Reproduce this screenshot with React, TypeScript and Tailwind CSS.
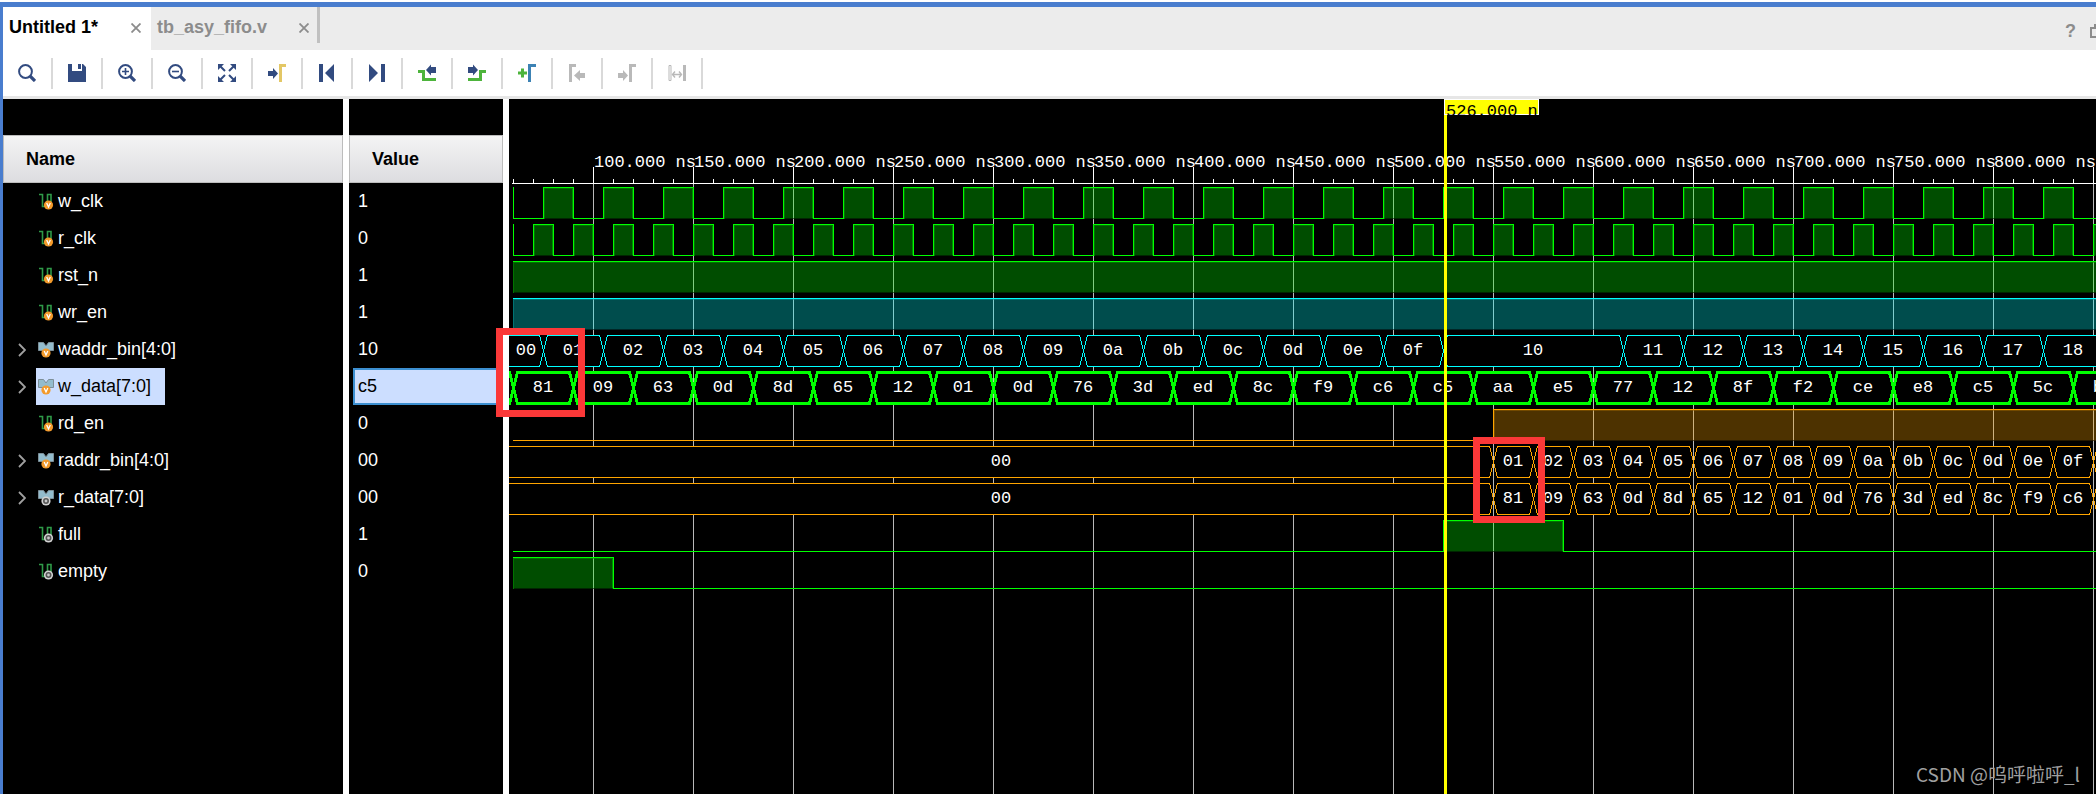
import { useState } from 'react'
import type { ReactNode } from 'react'

const GREEN = '#00ff00'
const CYAN = '#00ffff'
const ORANGE = '#ffa500'

const NAVY = '#324b80'
const LEAF = '#4db43c'
const GREY = '#b9b9b9'

// Time axis: two pixels per nanosecond, 100 ns at x = 84
const NS_END = 1400
const LAST_LABEL = 800
const xAt = (ns: number) => 84 + (ns - 100) * 2
const START = 60
const AXIS_Y = 84
const ROW_PITCH = 37
const ROW_HEIGHT = 31

type Segment = [from: number, to: number, label: string]

interface Signal {
  name: string
  value: string
  color: string
  kind: 'reg' | 'wire'
  high?: [number, number][]
  bus?: Segment[]
}

function clock(first: number, width: number, period: number) {
  const out: [number, number][] = []
  for (let t = first; t < NS_END; t += period) out.push([t, t + width])
  return out
}

function steps(from: number, step: number, labels: string): Segment[] {
  return labels.split(' ').map((l, i) => [from + i * step, from + (i + 1) * step, l])
}

const signals: Signal[] = [
  { name: 'w_clk', value: '1', color: GREEN, kind: 'reg', high: clock(75, 15, 30) },
  { name: 'r_clk', value: '0', color: GREEN, kind: 'reg', high: clock(70, 10, 20) },
  { name: 'rst_n', value: '1', color: GREEN, kind: 'reg', high: [[START, NS_END]] },
  { name: 'wr_en', value: '1', color: CYAN, kind: 'reg', high: [[START, NS_END]] },
  {
    name: 'waddr_bin[4:0]', value: '10', color: CYAN, kind: 'reg',
    bus: [
      [54, 75, '00'],
      ...steps(75, 30, '01 02 03 04 05 06 07 08 09 0a 0b 0c 0d 0e 0f'),
      [525, 615, '10'],
      ...steps(615, 30, '11 12 13 14 15 16 17 18'),
    ],
  },
  {
    name: 'w_data[7:0]', value: 'c5', color: GREEN, kind: 'reg',
    bus: [
      [30, 60, ''],
      ...steps(60, 30, '81 09 63 0d 8d 65 12 01 0d 76 3d ed 8c f9 c6 c5 aa e5 77 12 8f f2 ce e8 c5 5c bd'),
    ],
  },
  { name: 'rd_en', value: '0', color: ORANGE, kind: 'reg', high: [[550, NS_END]] },
  {
    name: 'raddr_bin[4:0]', value: '00', color: ORANGE, kind: 'reg',
    bus: [
      [54, 550, '00'],
      ...steps(550, 20, '01 02 03 04 05 06 07 08 09 0a 0b 0c 0d 0e 0f'),
      [850, NS_END, ''],
    ],
  },
  {
    name: 'r_data[7:0]', value: '00', color: ORANGE, kind: 'wire',
    bus: [
      [54, 550, '00'],
      ...steps(550, 20, '81 09 63 0d 8d 65 12 01 0d 76 3d ed 8c f9 c6'),
      [850, NS_END, ''],
    ],
  },
  { name: 'full', value: '1', color: GREEN, kind: 'wire', high: [[525, 585]] },
  { name: 'empty', value: '0', color: GREEN, kind: 'wire', high: [[START, 110]] },
]

/* toolbar icons, all on an 18 x 18 grid */

function Glass({ children }: { children?: ReactNode }) {
  return (
    <>
      <circle cx="7.5" cy="7.5" r="6.4" fill="none" stroke={NAVY} strokeWidth="2" />
      <path d="M12 12 L17 17" stroke={NAVY} strokeWidth="3.2" />
      {children}
    </>
  )
}

const tools: { label: string; disabled?: boolean; art: ReactNode }[] = [
  { label: 'Search', art: <Glass /> },
  {
    label: 'Save',
    art: (
      <>
        <path d="M0 0H4V7H14V0H15L18 3V18H0Z" fill={NAVY} />
        <path d="M10 0H13V5H10Z" fill={NAVY} />
      </>
    ),
  },
  { label: 'Zoom in', art: <Glass><path d="M7.5 4V11M4 7.5H11" stroke={NAVY} strokeWidth="1.6" /></Glass> },
  { label: 'Zoom out', art: <Glass><path d="M4 7.5H11" stroke={NAVY} strokeWidth="1.6" /></Glass> },
  {
    label: 'Zoom fit',
    art: (
      <>
        <path d="M0 0H6L0 6ZM18 0H12L18 6ZM0 18H6L0 12ZM18 18H12L18 12Z" fill={NAVY} />
        <path d="M2 2L7 7M16 2L11 7M2 16L7 11M16 16L11 11" stroke={NAVY} strokeWidth="2" />
      </>
    ),
  },
  {
    label: 'Go to cursor',
    art: (
      <>
        <path d="M0 7H5V4L10 9.5L5 15V12H0Z" fill={NAVY} />
        <path d="M12.5 18V1.5H18" fill="none" stroke="#e3c765" strokeWidth="3" />
      </>
    ),
  },
  { label: 'Go to time 0', art: <path d="M1 0H5V18H1ZM16 0V18L7 9Z" fill={NAVY} /> },
  { label: 'Go to last time', art: <path d="M13 0H17V18H13ZM1 0V18L10 9Z" fill={NAVY} /> },
  {
    label: 'Previous transition',
    art: (
      <>
        <path d="M0 7.5H5.5V15.5H18" fill="none" stroke={LEAF} strokeWidth="3" />
        <path d="M18 3H13V0.5L8 6L13 11.5V9H18Z" fill={NAVY} />
      </>
    ),
  },
  {
    label: 'Next transition',
    art: (
      <>
        <path d="M0 15.5H12.5V7.5H18" fill="none" stroke={LEAF} strokeWidth="3" />
        <path d="M0 3H5V0.5L10 6L5 11.5V9H0Z" fill={NAVY} />
      </>
    ),
  },
  {
    label: 'Add marker',
    art: (
      <>
        <path d="M4.5 4.5V13.5M0 9H9" stroke={LEAF} strokeWidth="3" />
        <path d="M11.5 18V1.5H18" fill="none" stroke="#3c82b4" strokeWidth="3" />
      </>
    ),
  },
  {
    label: 'Previous marker',
    disabled: true,
    art: (
      <>
        <path d="M2.5 18V1.5H8" fill="none" stroke={GREY} strokeWidth="3" />
        <path d="M17 9H12V6L6 11.5L12 17V14H17Z" fill={GREY} />
      </>
    ),
  },
  {
    label: 'Next marker',
    disabled: true,
    art: (
      <>
        <path d="M12.5 18V1.5H18" fill="none" stroke={GREY} strokeWidth="3" />
        <path d="M0 9H5V6L10 11.5L5 17V14H0Z" fill={GREY} />
      </>
    ),
  },
  {
    label: 'Swap cursors',
    disabled: true,
    art: (
      <>
        <path d="M1 1.5H3V16.5H1Z" fill="none" stroke={GREY} />
        <path d="M15 1H18V17H15Z" fill={GREY} />
        <path d="M5 10.5H13M7 7.5L4.5 10.5L7 13.5M11 7.5L13.5 10.5L11 13.5" fill="none" stroke={GREY} strokeWidth="1.4" />
      </>
    ),
  },
]

function Badge({ kind, cx }: { kind: Signal['kind']; cx: number }) {
  if (kind === 'wire') {
    return (
      <>
        <circle cx={cx} cy="12" r="4.6" fill="#d2d2d2" />
        <circle cx={cx} cy="12" r="2.2" fill="#c8c8c8" stroke="#555" strokeWidth="1.6" />
      </>
    )
  }
  return (
    <>
      <circle cx={cx} cy="12" r="4.6" fill="#f39a2b" />
      <path d={`M${cx - 1.8} 10L${cx} 14L${cx + 1.8} 10`} fill="none" stroke="#fff" strokeWidth="1.3" />
    </>
  )
}

function SignalIcon({ signal }: { signal: Signal }) {
  return (
    <svg width="16" height="17" viewBox="0 0 16 17" className="shrink-0">
      {signal.bus ? (
        <>
          <path d="M0.5 1.5H5.5L8 5L10.5 1.5H15.5V9.5H0.5Z" fill="#93bccd" stroke="#7d8f98" />
          <Badge kind={signal.kind} cx={8} />
        </>
      ) : (
        <>
          <path d="M1 1.5H4.5V13.5H9.5V1.5H13V9" fill="none" stroke="#2f9a48" strokeWidth="1.6" />
          <Badge kind={signal.kind} cx={10.5} />
        </>
      )}
    </svg>
  )
}

/* waveforms */

function Level({ signal, top }: { signal: Signal; top: number }) {
  const high = signal.high ?? []
  const bottom = top + ROW_HEIGHT
  const low = !high.some(([a]) => a === START)
  const hadPulse = signal.name.endsWith('clk')

  let d = `M3 ${low && !hadPulse ? bottom : top}`
  if (hadPulse) d += `H${xAt(START)}V${bottom}`
  for (const [a, b] of high) {
    if (a === START) d += `H${xAt(b)}V${bottom}`
    else d += `H${xAt(a)}V${top}H${xAt(b)}V${bottom}`
  }
  d += `H${xAt(NS_END)}`

  return (
    <g stroke={signal.color} fill="none" transform="translate(0.5 0.5)">
      {high.map(([a, b]) => {
        const left = xAt(a) + (a === START ? 0 : 1)
        return (
          <rect
            key={a}
            x={left}
            y={top + 1}
            width={xAt(b) - 1 - left}
            height={ROW_HEIGHT - 1}
            fill={signal.color}
            fillOpacity="0.3"
            stroke="none"
          />
        )
      })}
      <path d={d} />
      {high.map(([a, b]) => {
        const left = xAt(a) + (a === START ? 0 : 1)
        const edge = `M${left} ${bottom}V${top + 1}H${xAt(b) - 1}V${bottom}`
        return (
          <g key={a}>
            <path d={edge} stroke="#000" strokeOpacity="0.35" />
            <path d={edge} strokeOpacity="0.45" />
            <path d={`M${left} ${bottom}H${xAt(b) - 1}`} stroke="#000" strokeOpacity="0.5" />
          </g>
        )
      })}
    </g>
  )
}

function Bus({ signal, top, thick }: { signal: Signal; top: number; thick: boolean }) {
  const mid = top + 15
  const bottom = top + ROW_HEIGHT
  const cells = signal.bus!.map(([a, b, label]) => {
    const x0 = xAt(a)
    const x1 = xAt(b)
    return {
      key: a,
      label,
      // a segment that began before the window is centred on its visible part
      centre: (Math.max(x0, 0) + x1) / 2,
      points: `${x0},${mid} ${x0 + 4},${top} ${x1 - 4},${top} ${x1},${mid} ${x1},${mid + 1} ${x1 - 4},${bottom} ${x0 + 4},${bottom} ${x0},${mid + 1}`,
    }
  })
  return (
    <g>
      <g transform="translate(0.5 0.5)">
        {cells.map((c) => <polygon key={c.key} points={c.points} fill="#000" />)}
        {cells.map((c) => (
          <polygon key={c.key} points={c.points} fill="none" stroke={signal.color} strokeWidth={thick ? 3 : 1} />
        ))}
      </g>
      {cells.map((c) => c.label && (
        <text key={c.key} x={c.centre} y={top + 20} fill="#fff" textAnchor="middle">{c.label}</text>
      ))}
    </g>
  )
}

function Waveform({ selected }: { selected: string }) {
  const ticks: number[] = []
  for (let t = START; t < NS_END; t += 10) ticks.push(t)
  const majors = ticks.filter((t) => t >= 100 && t % 50 === 0)
  const cursor = xAt(526)

  return (
    <svg
      className="block h-full w-full bg-black font-['Liberation_Mono',monospace] text-[17px]"
      shapeRendering="crispEdges"
      fill="currentColor"
      role="img"
      aria-label="Waveform"
    >
      {majors.map((t) => (
        <line key={t} x1={xAt(t) + 0.5} x2={xAt(t) + 0.5} y1={AXIS_Y} y2="100%" stroke="#b9b9b9" />
      ))}
      {ticks.map((t) => {
        const x = xAt(t) + 0.5
        return <line key={t} x1={x} x2={x} y1={majors.includes(t) ? 68 : 80} y2={AXIS_Y} stroke="#fff" />
      })}
      <line x1="3" x2="100%" y1={AXIS_Y + 0.5} y2={AXIS_Y + 0.5} stroke="#fff" />
      {majors.filter((t) => t <= LAST_LABEL).map((t) => (
        <text key={t} x={xAt(t) + 1} y="68" fill="#fff">{`${t}.000 ns`}</text>
      ))}

      {signals.map((s, i) => {
        const top = 88 + i * ROW_PITCH
        return s.bus
          ? <Bus key={s.name} signal={s} top={top} thick={s.name === selected} />
          : <Level key={s.name} signal={s} top={top} />
      })}

      <rect x={cursor - 1} y="0" width="3" height="100%" fill="#ffff00" />
      <svg x={cursor - 1} y="0" width="95" height="16">
        <rect x="0.5" y="0.5" width="94" height="15" fill="#ffff00" stroke="#fff" />
        <text x="2" y="17" fill="#000">526.000 ns</text>
      </svg>
    </svg>
  )
}

function CloseX() {
  return (
    <svg width="10" height="10" viewBox="0 0 10 10">
      <path d="M0.5 0.5L9.5 9.5M9.5 0.5L0.5 9.5" stroke="#8c8c8c" strokeWidth="1.8" />
    </svg>
  )
}

function ColumnHeader({ children }: { children: ReactNode }) {
  return (
    <div className="mt-9 flex h-12 items-center border border-[#bcbcbc] bg-linear-to-b from-[#f4f4f4] to-[#dddde0] px-[22px] font-bold">
      {children}
    </div>
  )
}

export default function App() {
  const [selected, setSelected] = useState('w_data[7:0]')

  return (
    <div className="flex h-screen flex-col bg-white pt-[2px] font-['Liberation_Sans',Arial,sans-serif] text-lg text-black">
      <div className="flex min-h-0 flex-1 flex-col border-t-5 border-l-3 border-[#497dce]">
        <nav className="flex h-[43px] shrink-0 items-start overflow-hidden bg-[#ececec] font-bold">
          <div className="flex h-full w-[148px] items-start justify-between bg-white pt-1.5 pr-2.5 pl-1.5">
            <a href="#wave">Untitled 1*</a>
            <button aria-label="Close Untitled 1" className="mt-2.5"><CloseX /></button>
          </div>
          <div className="flex h-9 w-[169px] items-start justify-between border-r-3 border-[#c0c0c0] pt-1.5 pr-2 pl-1.5 text-[#8c8c8c]">
            <a href="#source">tb_asy_fifo.v</a>
            <button aria-label="Close tb_asy_fifo.v" className="mt-2.5"><CloseX /></button>
          </div>
          <div className="-mr-2 ml-auto flex items-center gap-3.5 pt-2.5 text-lg text-[#8c8c8c]">
            <button aria-label="Help">?</button>
            <button aria-label="Float">
              <svg width="14" height="14" viewBox="0 0 14 14">
                <path d="M1 4H8V13H1ZM5 4V1H13V10H8" fill="none" stroke="#8c8c8c" strokeWidth="2" />
              </svg>
            </button>
          </div>
        </nav>

        <div className="flex h-[49px] shrink-0 items-center border-b-3 border-[#e6e6e6]">
          {tools.map((t) => (
            <button
              key={t.label}
              aria-label={t.label}
              disabled={t.disabled}
              className="flex h-[31px] w-[50px] items-center justify-center border-r-2 border-[#d9d9d9]"
            >
              <svg width="18" height="18" viewBox="0 0 18 18">{t.art}</svg>
            </button>
          ))}
        </div>

        <main className="relative flex min-h-0 flex-1 gap-1.5 bg-white">
          <section className="w-[340px] shrink-0 bg-black text-white">
            <div className="text-black"><ColumnHeader>Name</ColumnHeader></div>
            {signals.map((s) => (
              <div key={s.name} className="flex h-[37px] items-center">
                <div className="flex w-[33px] shrink-0 justify-end pr-2.5">
                  {s.bus && (
                    <button aria-label={`Expand ${s.name}`}>
                      <svg width="8" height="14" viewBox="0 0 8 14">
                        <path d="M1 1L7 7L1 13" fill="none" stroke="#a0a0a0" strokeWidth="1.8" />
                      </svg>
                    </button>
                  )}
                </div>
                <button
                  onClick={() => setSelected(s.name)}
                  className={`flex h-full items-center gap-1 pr-3.5 pl-0.5 ${s.name === selected ? 'bg-[#ccdeff] text-black' : ''}`}
                >
                  <SignalIcon signal={s} />
                  <span className="pb-0.5">{s.name}</span>
                </button>
              </div>
            ))}
          </section>

          <section className="w-[154px] shrink-0 bg-black text-white">
            <div className="text-black"><ColumnHeader>Value</ColumnHeader></div>
            {signals.map((s) => (
              <div
                key={s.name}
                className={`ml-1 flex h-[37px] items-center border-2 px-[3px] ${s.name === selected ? 'border-[#3c8fd0] bg-[#ccdeff] text-black' : 'border-transparent'}`}
              >
                <span className="pb-0.5">{s.value}</span>
              </div>
            ))}
          </section>

          <section className="min-w-0 flex-1 overflow-hidden">
            <Waveform selected={selected} />
          </section>

          {/* annotations drawn over the viewer */}
          <div className="pointer-events-none absolute top-[229px] left-[493px] h-[89px] w-[89px] border-7 border-[#fb3838]" />
          <div className="pointer-events-none absolute top-[338px] left-[1470px] h-[86px] w-[72px] border-7 border-[#fb3838]" />
          <p className="pointer-events-none absolute right-4 bottom-1.5 font-['Noto_Sans_CJK_SC',sans-serif] text-[19px] leading-7 text-[#a0a0a0]">
            CSDN @呜呼啦呼_l
          </p>
        </main>
      </div>
    </div>
  )
}
